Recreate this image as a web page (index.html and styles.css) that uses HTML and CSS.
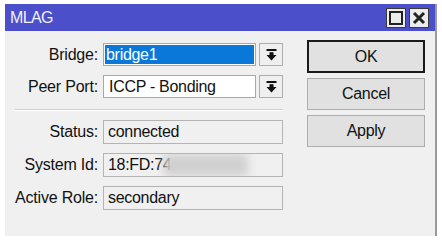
FILE: index.html
```html
<!DOCTYPE html>
<html>
<head>
<meta charset="utf-8">
<link rel="stylesheet" href="styles.css">
</head>
<body>
<div class="window">
  <div class="titlebar">
    <span class="title">MLAG</span>
    <div class="tbtns">
      <span class="tbtn"><svg width="14" height="14" viewBox="0 0 14 14"><rect x="1" y="1" width="12" height="12" fill="none" stroke="#222" stroke-width="2"/></svg></span>
      <span class="tbtn"><svg width="14" height="14" viewBox="0 0 14 14"><path d="M2 2 L12 12 M12 2 L2 12" stroke="#222" stroke-width="3"/></svg></span>
    </div>
  </div>
  <div class="content">
    <div class="form">
      <div class="row">
        <span class="label">Bridge:</span>
        <div class="field combo">
          <div class="input edit"><span class="sel">bridge1</span></div>
          <span class="drop"><svg width="11" height="12" viewBox="0 0 11 12"><rect x="0.5" y="0" width="10" height="2" fill="#111"/><rect x="3.5" y="3.2" width="4" height="3" fill="#111"/><path d="M0.5 6 H10.5 L5.5 11.5 Z" fill="#111"/></svg></span>
        </div>
      </div>
      <div class="row">
        <span class="label">Peer Port:</span>
        <div class="field combo">
          <div class="input edit"><span class="val">ICCP - Bonding</span></div>
          <span class="drop"><svg width="11" height="12" viewBox="0 0 11 12"><rect x="0.5" y="0" width="10" height="2" fill="#111"/><rect x="3.5" y="3.2" width="4" height="3" fill="#111"/><path d="M0.5 6 H10.5 L5.5 11.5 Z" fill="#111"/></svg></span>
        </div>
      </div>
      <div class="sep"></div>
      <div class="row ro">
        <span class="label">Status:</span>
        <div class="field input readonly"><span class="val">connected</span></div>
      </div>
      <div class="row ro">
        <span class="label">System Id:</span>
        <div class="field input readonly"><span class="val">18:FD:74</span><span class="blur"></span></div>
      </div>
      <div class="row ro">
        <span class="label">Active Role:</span>
        <div class="field input readonly"><span class="val">secondary</span></div>
      </div>
    </div>
    <div class="buttons">
      <button class="btn default">OK</button>
      <button class="btn">Cancel</button>
      <button class="btn">Apply</button>
    </div>
  </div>
</div>
</body>
</html>
```
FILE: styles.css
```css
html, body {
  margin: 0;
  padding: 0;
  background: #ffffff;
}
body {
  font-family: "Liberation Sans", Arial, sans-serif;
  color: #111111;
}
.window {
  margin: 4px 0 0 5px;
  width: 432px;
  height: 232px;
  background: #f0f0f0;
  box-sizing: border-box;
  border-right: 2px solid #9a9a9a;
  display: flex;
  flex-direction: column;
}
.titlebar {
  height: 27px;
  background: #4b4fc9;
  display: flex;
  align-items: center;
  justify-content: space-between;
  padding: 0 6px 0 5px;
  flex: none;
}
.title {
  color: #f2f2ff;
  font-size: 16px;
  letter-spacing: -0.6px;
}
.tbtns {
  display: flex;
  gap: 3px;
}
.tbtn {
  width: 20px;
  height: 20px;
  box-sizing: border-box;
  background: #ececec;
  border: 1px solid #3a3a3a;
  display: flex;
  align-items: center;
  justify-content: center;
}
.content {
  display: flex;
  padding: 9px 0 0 0;
}
.form {
  width: 278px;
  display: flex;
  flex-direction: column;
  padding-top: 3px;
}
.row {
  display: flex;
  align-items: center;
  height: 23px;
  margin-bottom: 9px;
}
.row.ro {
  height: 24px;
}
.label {
  width: 93px;
  text-align: right;
  font-size: 16px;
  letter-spacing: -0.2px;
  flex: none;
  box-sizing: border-box;
  margin-right: 5px;
}
.field {
  width: 180px;
  height: 100%;
  box-sizing: border-box;
}
.combo {
  display: flex;
  gap: 3px;
}
.input {
  box-sizing: border-box;
  height: 100%;
  display: flex;
  align-items: center;
  font-size: 16px;
  letter-spacing: -0.3px;
  overflow: hidden;
}
.edit {
  flex: 1;
  background: #ffffff;
  border: 1px solid #a8a8a8;
  padding: 1px;
}
.readonly {
  background: #f0f0f0;
  border: 1px solid #b4b4b4;
  position: relative;
}
.sel {
  display: block;
  flex: 1;
  height: 100%;
  background: #0a78d8;
  color: #ffffff;
  line-height: 19px;
  padding-left: 1px;
}
.val {
  padding-left: 4px;
}
.drop {
  width: 24px;
  flex: none;
  box-sizing: border-box;
  border: 1px solid #adadad;
  background: #efefef;
  display: flex;
  align-items: center;
  justify-content: center;
}
.blur {
  position: absolute;
  left: 60px;
  top: 0;
  width: 84px;
  height: 100%;
  background: #d0d0d0;
  filter: blur(4px);
}
.sep {
  margin: 2px 0 9px 10px;
  height: 1px;
  background: #cfcfcf;
  border-bottom: 1px solid #ffffff;
}
.buttons {
  display: flex;
  flex-direction: column;
  gap: 5px;
  margin-left: 24px;
}
.btn {
  width: 118px;
  height: 32px;
  font-family: "Liberation Sans", Arial, sans-serif;
  font-size: 16px;
  letter-spacing: -0.3px;
  color: #111111;
  background: #e1e1e1;
  border: 1px solid #adadad;
  margin: 0;
  padding: 0;
}
.btn.default {
  border: 2px solid #1a1a1a;
  height: 33px;
}
```
